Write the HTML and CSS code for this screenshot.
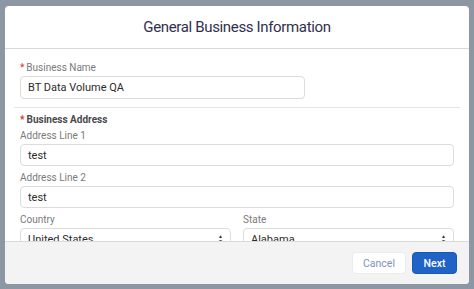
FILE: index.html
```html
<!DOCTYPE html>
<html lang="en">
<head>
  <meta charset="UTF-8">
  <title>General Business Information</title>
  <link rel="stylesheet" href="styles.css">
</head>
<body>
  <div class="modal">
    <div class="modal-header">
      <h2 class="modal-title">General Business Information</h2>
    </div>
    <div class="modal-body">
      <div class="field">
        <label class="field-label"><abbr class="required">*</abbr>Business Name</label>
        <div class="input input-name">BT Data Volume QA</div>
      </div>
      <hr class="divider">
      <div class="section">
        <div class="section-title"><abbr class="required">*</abbr>Business Address</div>
        <div class="field">
          <label class="field-label">Address Line 1</label>
          <div class="input">test</div>
        </div>
        <div class="field">
          <label class="field-label">Address Line 2</label>
          <div class="input">test</div>
        </div>
        <div class="field-row">
          <div class="field">
            <label class="field-label">Country</label>
            <div class="input select">United States<span class="arrows">&#9650;<br>&#9660;</span></div>
          </div>
          <div class="field">
            <label class="field-label">State</label>
            <div class="input select">Alabama<span class="arrows">&#9650;<br>&#9660;</span></div>
          </div>
        </div>
      </div>
    </div>
    <div class="modal-footer">
      <button class="btn btn-neutral">Cancel</button>
      <button class="btn btn-brand">Next</button>
    </div>
  </div>
</body>
</html>
```

FILE: styles.css
```css
body {
  margin: 0;
  height: 289px;
  background-color: #8d97a4;
  font-family: 'Roboto', 'Liberation Sans', sans-serif;
  overflow: hidden;
}
.modal {
  margin: 6px 5px 0;
  height: 278px;
  background: #fff;
  border-radius: 4px;
  overflow: hidden;
  display: flex;
  flex-direction: column;
}
.modal-header {
  height: 42px;
  border-bottom: 1px solid #d8d8d8;
  display: flex;
  align-items: center;
  justify-content: center;
  flex-shrink: 0;
}
.modal-title {
  margin: 0;
  font-size: 15px;
  font-weight: 400;
  letter-spacing: -0.35px;
  color: #30304e;
}
.modal-body {
  flex: 1;
  overflow: hidden;
  padding: 10px 9px 0 9px;
}
.field {
  padding: 0 6px 4px;
}
.field-label {
  display: block;
  font-size: 10px;
  line-height: 17px;
  color: #7a7a7a;
}
.required {
  color: #c23934;
  text-decoration: none;
  margin-right: 2px;
}
.input {
  height: 22px;
  box-sizing: border-box;
  border: 1px solid #dcdcdc;
  border-radius: 4px;
  padding: 0 7px;
  display: flex;
  align-items: center;
  font-size: 11px;
  color: #2b2b2b;
}
.input-name {
  width: 285px;
  height: 23px;
}
.divider {
  border: none;
  border-top: 1px solid #e4e4e4;
  margin: 4px 0 4px;
}
.section-title {
  padding: 0 6px;
  font-size: 10px;
  line-height: 16px;
  font-weight: 700;
  color: #4a4a4a;
}
.section .field-label {
  line-height: 16px;
}
.field-row {
  display: grid;
  grid-template-columns: 1fr 1fr;
  column-gap: 12px;
  padding: 0 6px;
}
.field-row .field {
  padding: 0;
}
.select {
  position: relative;
}
.arrows {
  position: absolute;
  right: 7px;
  top: 5px;
  font-size: 5px;
  line-height: 5px;
  color: #333;
}
.modal-footer {
  height: 42px;
  flex-shrink: 0;
  border-top: 1px solid #dadada;
  background: #f3f3f3;
  display: flex;
  align-items: center;
  justify-content: flex-end;
  gap: 6px;
  padding: 0 12px 0 0;
}
.btn {
  height: 22px;
  border-radius: 4px;
  font-family: inherit;
  font-size: 10.5px;
  padding: 0;
  cursor: pointer;
}
.btn-neutral {
  width: 54px;
  background: #fff;
  border: 1px solid #ececec;
  color: #7d92b8;
}
.btn-brand {
  width: 45px;
  background: #1f63c6;
  border: 1px solid #1a58b5;
  color: #fff;
  font-weight: 500;
}
```
